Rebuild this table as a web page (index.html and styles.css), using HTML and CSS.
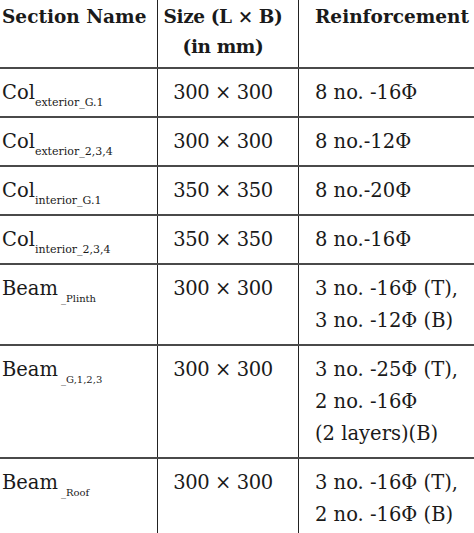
FILE: index.html
```html
<!DOCTYPE html>
<html lang="en">
<head>
    <meta charset="UTF-8">
    <meta name="viewport" content="width=device-width, initial-scale=1.0">
    <title>Section Reinforcement</title>
    <link rel="stylesheet" href="styles.css">
</head>
<body>
    <table class="section-table">
        <thead>
            <tr>
                <th class="col-name">Section Name</th>
                <th class="col-size">Size (L × B)<br>(in mm)</th>
                <th class="col-rebar">Reinforcement</th>
            </tr>
        </thead>
        <tbody>
            <tr>
                <td class="col-name">Col<sub>exterior_G.1</sub></td>
                <td class="col-size">300 × 300</td>
                <td class="col-rebar">8 no. -16Φ</td>
            </tr>
            <tr>
                <td class="col-name">Col<sub>exterior_2,3,4</sub></td>
                <td class="col-size">300 × 300</td>
                <td class="col-rebar">8 no.-12Φ</td>
            </tr>
            <tr>
                <td class="col-name">Col<sub>interior_G.1</sub></td>
                <td class="col-size">350 × 350</td>
                <td class="col-rebar">8 no.-20Φ</td>
            </tr>
            <tr>
                <td class="col-name">Col<sub>interior_2,3,4</sub></td>
                <td class="col-size">350 × 350</td>
                <td class="col-rebar">8 no.-16Φ</td>
            </tr>
            <tr>
                <td class="col-name">Beam<sub class="beam-sub">_Plinth</sub></td>
                <td class="col-size">300 × 300</td>
                <td class="col-rebar">3 no. -16Φ (T),<br>3 no. -12Φ (B)</td>
            </tr>
            <tr>
                <td class="col-name">Beam<sub class="beam-sub">_G,1,2,3</sub></td>
                <td class="col-size">300 × 300</td>
                <td class="col-rebar">3 no. -25Φ (T),<br>2 no. -16Φ<br>(2 layers)(B)</td>
            </tr>
            <tr>
                <td class="col-name">Beam<sub class="beam-sub">_Roof</sub></td>
                <td class="col-size">300 × 300</td>
                <td class="col-rebar">3 no. -16Φ (T),<br>2 no. -16Φ (B)</td>
            </tr>
        </tbody>
    </table>
</body>
</html>
```

FILE: styles.css
```css
body {
    margin: 0;
    padding: 0;
    background-color: #fff;
    font-family: "DejaVu Serif", "Liberation Serif", serif;
    color: #1a1a1a;
    overflow: hidden;
}
.section-table {
    border-collapse: collapse;
    width: 474px;
    table-layout: fixed;
}
.section-table th,
.section-table td {
    vertical-align: top;
    text-align: left;
    white-space: nowrap;
}
.section-table th {
    font-size: 18.5px;
    font-weight: bold;
    line-height: 30px;
    padding: 2px 0 5px 0;
    border-bottom: 2px solid #4a4a4a;
}
.section-table td {
    font-size: 19.5px;
    line-height: 32px;
    padding: 8px 0 7px 0;
    border-bottom: 2px solid #4a4a4a;
}
.col-name {
    width: 155px;
    padding-left: 2px !important;
}
.col-size {
    width: 130px;
    text-align: center !important;
    padding-right: 10px !important;
    border-left: 1.5px solid #222;
    letter-spacing: -0.4px;
}
.col-rebar {
    padding-left: 16px !important;
    border-left: 1.5px solid #222;
}
sub {
    font-size: 11px;
    line-height: 0;
    vertical-align: -7px;
}
.beam-sub {
    font-size: 10px;
    margin-left: 3px;
}
```
